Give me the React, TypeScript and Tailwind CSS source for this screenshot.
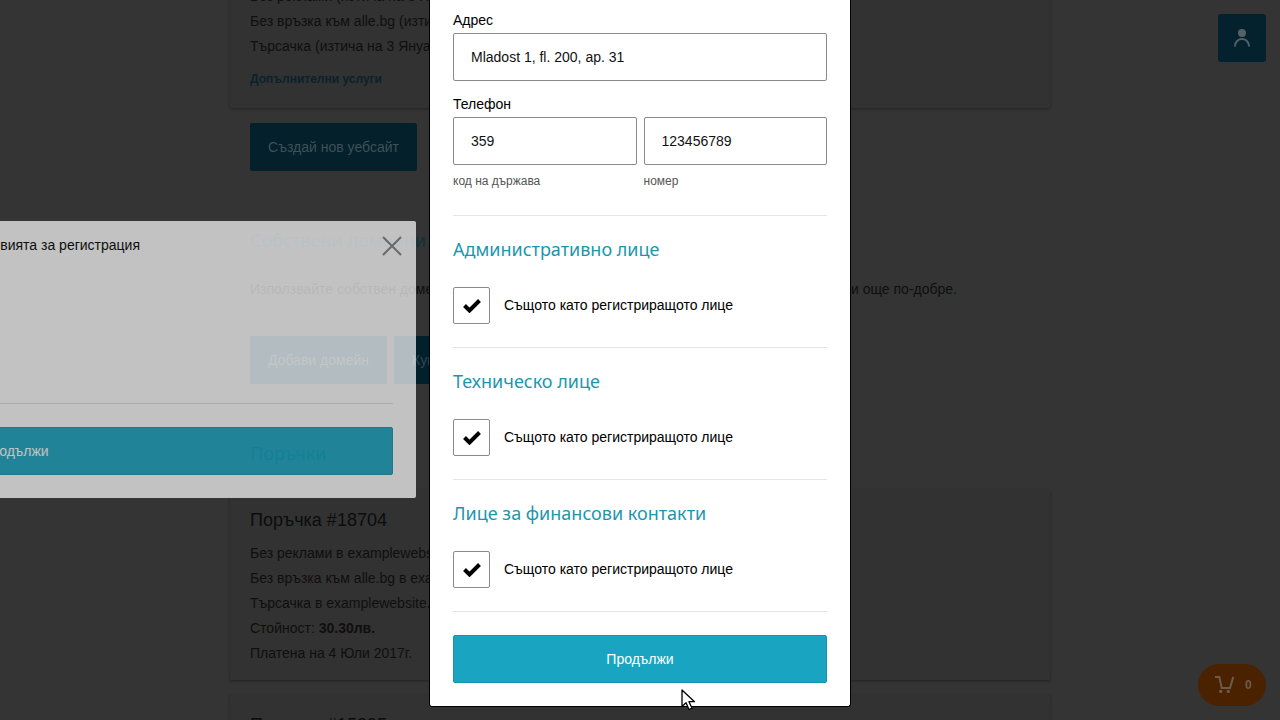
const sans = "font-['Liberation_Sans',Arial,sans-serif]";

function Contact({ title }: { title: string }) {
  return (
    <div className="border-t border-[#e4e4e4] pb-[23px]">
      <h2 className="mt-[19px] mb-[24px] h-7 font-['Noto_Sans',sans-serif] text-lg leading-7 text-[#1b96ae]">
        {title}
      </h2>
      <div className="flex items-center gap-[14px]">
        <div className="flex h-[37px] w-[37px] items-center justify-center rounded-[2px] border border-[#8a8a8a]">
          <svg width="18" height="14" viewBox="0 0 18 14" fill="none">
            <path d="M1.5 6.5L6.5 11.5 16.5 1.5" stroke="black" strokeWidth="4" />
          </svg>
        </div>
        <span className="pb-[2px] text-sm text-black">Същото като регистриращото лице</span>
      </div>
    </div>
  );
}

function OrderCard({ title, lines }: { title: string; lines: React.ReactNode[] }) {
  return (
    <div className="mb-[15px] rounded-[2px] bg-[#323232] px-5 pt-[18px] pb-[14px] shadow-[0_1px_3px_rgba(0,0,0,0.35)]">
      <h3 className="mb-[9px] text-lg leading-6 text-[#0c0c0c]">{title}</h3>
      {lines.map((line, i) => (
        <p key={i} className="text-sm leading-[25px] text-[#0f0f0f]">
          {line}
        </p>
      ))}
    </div>
  );
}

export default function App() {
  return (
    <div className={`relative h-[720px] w-[1280px] overflow-hidden bg-[#343434] ${sans}`}>
      {/* Dimmed page behind the dialogs */}
      <div className="mx-auto -mt-4 w-[820px] whitespace-nowrap">
        <div className="rounded-[2px] bg-[#323232] px-5 pb-[21px] shadow-[0_1px_3px_rgba(0,0,0,0.35)]">
          <p className="text-sm leading-[25px] text-[#0f0f0f]">Без реклами (изтича на 3 Януари 2018г.)</p>
          <p className="text-sm leading-[25px] text-[#0f0f0f]">Без връзка към alle.bg (изтича на 3 Януари 2018г.)</p>
          <p className="text-sm leading-[25px] text-[#0f0f0f]">Търсачка (изтича на 3 Януари 2018г.)</p>
          <p className="mt-3 text-xs leading-4 font-bold text-[#0a222b]">Допълнителни услуги</p>
        </div>

        <div className="mt-[15px] ml-5 flex h-12 w-[167px] items-center justify-center rounded-[2px] bg-[#03202b] text-sm text-[#3f5057]">
          Създай нов уебсайт
        </div>

        <div className="px-5">
          <h2 className="mt-[55px] font-['Noto_Sans',sans-serif] text-lg leading-7 text-[#12303a]">Собствени домейни</h2>
          <p className="mt-[25px] text-sm leading-5 text-[#0f0f0f]">
            Използвайте собствен домейн за вашия уебсайт, така той ще изглежда по-професионално, и още по-добре.
          </p>
          <div className="mt-[37px] flex gap-[7px]">
            <div className="flex h-12 items-center rounded-[2px] bg-[#02202c] px-[18px] text-sm text-[#33454b]">
              Добави домейн
            </div>
            <div className="flex h-12 items-center rounded-[2px] bg-[#02202c] px-[18px] text-sm text-[#33454b]">
              Купи домейн
            </div>
          </div>
          <h2 className="mt-[55px] mb-[23px] font-['Noto_Sans',sans-serif] text-lg leading-7 text-[#0a2a34]">Поръчки</h2>
        </div>

        <OrderCard
          title="Поръчка #18704"
          lines={[
            'Без реклами в examplewebsite.bg',
            'Без връзка към alle.bg в examplewebsite.bg',
            'Търсачка в examplewebsite.bg',
            <>
              Стойност: <b>30.30лв.</b>
            </>,
            'Платена на 4 Юли 2017г.',
          ]}
        />
        <OrderCard title="Поръчка #15395" lines={[]} />
      </div>

      {/* Account and cart buttons */}
      <div className="absolute top-[14px] right-[14px] flex h-12 w-12 items-center justify-center rounded-[3px] bg-[#03222d]">
        <svg width="16" height="18" viewBox="0 0 16 18" fill="none">
          <circle cx="8" cy="4" r="4" fill="#566166" />
          <path d="M1 17.5C1 12 5 10 8 10s7 2 7 7.5" stroke="#566166" strokeWidth="2" />
        </svg>
      </div>
      <div className="absolute top-[664px] right-[14px] flex h-[42px] w-[68px] items-center gap-[10px] rounded-[21px] bg-[#4a2200] pl-[17px]">
        <svg width="20" height="18" viewBox="0 0 20 18" fill="none">
          <path d="M0 .9h4.3L6.7 12H15L18.3 .9" stroke="#6e5a48" strokeWidth="2" />
          <circle cx="5.7" cy="15.4" r="1.7" fill="#6e5a48" />
          <circle cx="13.3" cy="15.4" r="1.7" fill="#6e5a48" />
        </svg>
        <span className="text-xs font-bold text-[#6e5a48]">0</span>
      </div>

      {/* Previous step sliding out */}
      <div className="absolute top-[221px] left-[-386px] h-[277px] w-[802px] rounded-[2px] bg-white px-[23px] opacity-70">
        <p className="mt-[15px] w-[503px] text-right text-sm leading-[18px] text-black">
          Съгласен съм с условията за регистрация
        </p>
        <svg className="absolute top-[14px] right-[13px]" width="22" height="22" viewBox="0 0 22 22" fill="none">
          <path d="M2 2l18 18M20 2L2 20" stroke="#808080" strokeWidth="2" />
        </svg>
        <div className="mt-[149px] border-t border-[#e0e0e0]" />
        <div className="mt-[23px] flex h-12 items-center justify-center rounded-[2px] border border-[#1795ae] bg-[#19a5c2] text-sm text-white">
          Продължи
        </div>
      </div>

      {/* Active dialog */}
      <div className="absolute top-0 left-[429px] h-[707px] w-[422px] rounded-b-[3px] border-x border-b border-black bg-white px-[23px]">
        <label className="mt-[11px] block text-sm leading-[18px] text-black">Адрес</label>
        <div className="mt-1 flex h-12 items-center rounded-[2px] border border-[#8a8a8a] px-[17px] text-sm text-[#111111]">
          Mladost 1, fl. 200, ap. 31
        </div>
        <label className="mt-[14px] block text-sm leading-[18px] text-black">Телефон</label>
        <div className="mt-1 grid grid-cols-2 gap-[7px]">
          <div className="flex h-12 items-center rounded-[2px] border border-[#8a8a8a] px-[17px] text-sm text-[#111111]">
            359
          </div>
          <div className="flex h-12 items-center rounded-[2px] border border-[#8a8a8a] px-[17px] text-sm text-[#111111]">
            123456789
          </div>
        </div>
        <div className="mt-2 mb-[26px] grid grid-cols-2 gap-[7px] text-xs leading-4 text-[#555555]">
          <span>код на държава</span>
          <span>номер</span>
        </div>

        <Contact title="Административно лице" />
        <Contact title="Техническо лице" />
        <Contact title="Лице за финансови контакти" />

        <div className="border-t border-[#e4e4e4] pt-[23px]">
          <button className="flex h-12 w-full items-center justify-center rounded-[2px] border border-[#1795ae] bg-[#19a5c2] text-sm text-white">
            Продължи
          </button>
        </div>
      </div>

      {/* Mouse pointer */}
      <svg className="absolute top-[689px] left-[681px]" width="15" height="22" viewBox="0 0 15 22">
        <path
          d="M1 1v16.5l4-3.7 3 6.7 3-1.3-3-6.5h5.5z"
          fill="white"
          stroke="black"
          strokeWidth="1.3"
          strokeLinejoin="round"
        />
      </svg>
    </div>
  );
}
